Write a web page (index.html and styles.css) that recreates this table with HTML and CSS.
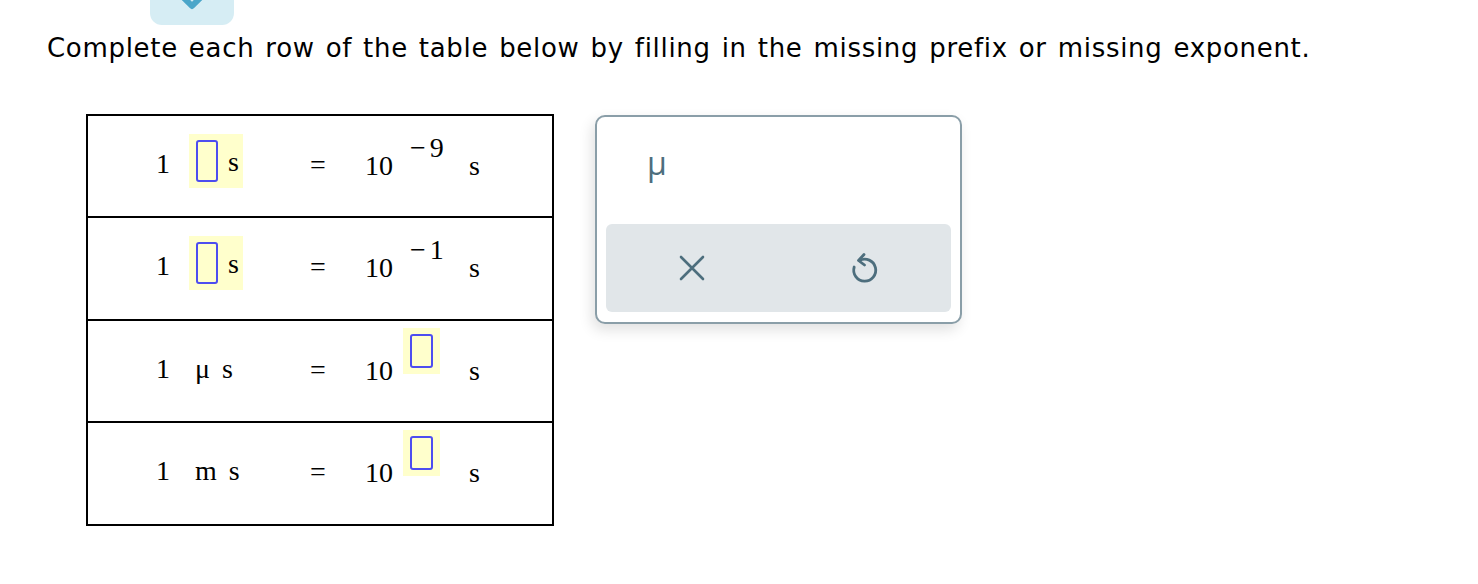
FILE: index.html
```html
<!DOCTYPE html>
<html>
<head>
<meta charset="utf-8">
<link rel="stylesheet" href="styles.css">
</head>
<body>
<div class="page">
  <div class="tab-row">
    <div class="tab">
      <svg class="chev" width="40" height="14" viewBox="0 0 40 14"><path d="M8 -6 L20 6 L32 -6" fill="none" stroke="#4ba6c9" stroke-width="6" stroke-linecap="round" stroke-linejoin="round"/></svg>
    </div>
  </div>
  <p class="prompt">Complete each row of the table below by filling in the missing prefix or missing exponent.</p>
  <div class="work">
    <div class="table">
      <div class="row">
        <span class="one">1</span>
        <span class="unit-box"><span class="slot"></span><span class="s">s</span></span>
        <span class="eq">=</span>
        <span class="ten">10</span>
        <span class="exp"><span class="minus">−</span>9</span>
        <span class="rs">s</span>
      </div>
      <div class="row">
        <span class="one">1</span>
        <span class="unit-box"><span class="slot"></span><span class="s">s</span></span>
        <span class="eq">=</span>
        <span class="ten">10</span>
        <span class="exp"><span class="minus">−</span>1</span>
        <span class="rs">s</span>
      </div>
      <div class="row">
        <span class="one">1</span>
        <span class="unit-text">μ<span class="gap"></span>s</span>
        <span class="eq">=</span>
        <span class="ten">10</span>
        <span class="exp-box"><span class="slot small"></span></span>
        <span class="rs">s</span>
      </div>
      <div class="row">
        <span class="one">1</span>
        <span class="unit-text">m<span class="gap"></span>s</span>
        <span class="eq">=</span>
        <span class="ten">10</span>
        <span class="exp-box"><span class="slot small"></span></span>
        <span class="rs">s</span>
      </div>
    </div>
    <div class="panel">
      <div class="choices"><span class="mu">μ</span></div>
      <div class="actions">
        <button class="act">
          <svg width="26" height="26" viewBox="0 0 26 26"><path d="M2 2 L24 24 M24 2 L2 24" stroke="#4d6e7d" stroke-width="2.6" stroke-linecap="round" fill="none"/></svg>
        </button>
        <button class="act">
          <svg width="30" height="34" viewBox="0 0 30 34"><path d="M9.5 9.5 A11 11 0 1 1 4.2 16" fill="none" stroke="#4d6e7d" stroke-width="2.8" stroke-linecap="round"/><path d="M14 3.5 L8.5 9.5 L14.5 14" fill="none" stroke="#4d6e7d" stroke-width="2.8" stroke-linecap="round" stroke-linejoin="round"/></svg>
        </button>
      </div>
    </div>
  </div>
</div>
</body>
</html>
```
FILE: styles.css
```css
html, body {
  margin: 0;
  padding: 0;
  background: #ffffff;
}
.page {
  width: 1478px;
  height: 584px;
  position: relative;
  overflow: hidden;
}
.tab-row {
  display: flex;
  padding-left: 150px;
  height: 25px;
}
.tab {
  width: 84px;
  height: 25px;
  background: #d6edf4;
  border-radius: 0 0 12px 12px;
  display: flex;
  justify-content: center;
}
.chev {
  display: block;
}
.prompt {
  margin: 5px 0 0 47px;
  font-family: "DejaVu Sans", Verdana, sans-serif;
  font-size: 26px;
  line-height: 36px;
  color: #000;
  letter-spacing: 0.7px;
  word-spacing: 2px;
  white-space: nowrap;
}
.work {
  display: flex;
  align-items: flex-start;
  margin-top: 48px;
  padding-left: 86px;
}
.table {
  width: 464px;
  border: 2px solid #000;
  font-family: "Liberation Serif", "Times New Roman", serif;
  font-size: 28px;
  color: #000;
}
.row {
  height: 101px;
  display: flex;
  align-items: flex-start;
  border-top: 2px solid #000;
}
.row:first-child {
  border-top: none;
  height: 100px;
}
.row:nth-child(3) {
  height: 100px;
}
.one {
  margin: 32px 0 0 68px;
  width: 33px;
  line-height: 32px;
}
.unit-box {
  margin-top: 18px;
  width: 54px;
  height: 54px;
  background: #ffffcc;
  display: flex;
  align-items: center;
  padding-left: 7px;
  box-sizing: border-box;
}
.slot {
  display: block;
  width: 22px;
  height: 42px;
  border: 2px solid #4d4df0;
  border-radius: 3px;
  box-sizing: border-box;
}
.slot.small {
  width: 23px;
  height: 34px;
}
.unit-box .s {
  margin-left: 10px;
  line-height: 32px;
  margin-top: 2px;
}
.unit-text {
  margin: 32px 0 0 6px;
  width: 48px;
  line-height: 32px;
}
.gap {
  display: inline-block;
  width: 12px;
}
.eq {
  margin: 33px 0 0 67px;
  width: 55px;
  line-height: 32px;
}
.ten {
  margin-top: 34px;
  line-height: 32px;
  width: 40px;
}
.exp {
  margin-top: 17px;
  font-size: 28px;
  line-height: 30px;
  width: 64px;
  padding-left: 5px;
  box-sizing: border-box;
}
.minus {
  margin-right: 4px;
}
.exp-box {
  margin-top: 7px;
  margin-left: -2px;
  width: 37px;
  height: 46px;
  background: #ffffcc;
  display: flex;
  justify-content: center;
  padding-top: 6px;
  box-sizing: border-box;
  margin-right: 29px;
}
.rs {
  margin-top: 34px;
  line-height: 32px;
}
.panel {
  margin-left: 41px;
  margin-top: 1px;
  width: 367px;
  height: 209px;
  box-sizing: border-box;
  border: 2px solid #8a9ea8;
  border-radius: 10px;
  padding: 0 9px;
  box-shadow: -3px 6px 14px rgba(0, 0, 0, 0.12);
  background: #fff;
}
.choices {
  height: 107px;
  display: flex;
  align-items: flex-start;
  padding-left: 41px;
}
.mu {
  margin-top: 28px;
  font-family: "Open Sans", sans-serif;
  font-size: 32px;
  line-height: 36px;
  color: #4d6e7d;
}
.actions {
  height: 88px;
  background: #e1e6e9;
  border-radius: 6px;
  display: flex;
}
.act {
  flex: 1;
  border: none;
  background: transparent;
  padding: 0;
  display: flex;
  align-items: center;
  justify-content: center;
}
```
